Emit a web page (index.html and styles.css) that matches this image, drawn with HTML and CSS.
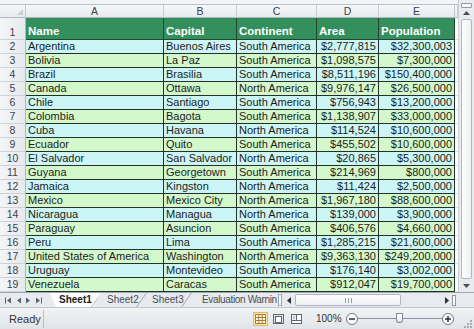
FILE: index.html
```html
<!DOCTYPE html>
<html lang="en">
  <head>
    <meta charset="UTF-8" />
    <title>Countries - Excel</title>
    <link rel="stylesheet" href="styles.css">
  </head>
  <body>
    <div class="app">
      <div class="main">
        <div class="work">
          <div class="edge"></div>

          <div class="row colhead">
            <div class="corner"><svg width="6" height="6"><polygon points="6,0 6,6 0,6" fill="#c9ced5"/></svg></div>
            <div>A</div><div>B</div><div>C</div><div>D</div><div>E</div><div></div>
          </div>

          <div class="row title">
            <div class="rh">1</div>
            <div class="cell">Name</div>
            <div class="cell">Capital</div>
            <div class="cell">Continent</div>
            <div class="cell">Area</div>
            <div class="cell">Population</div>
            <div class="gap"></div>
          </div>

          <div class="row cyan"><div class="rh">2</div><div class="cell">Argentina</div><div class="cell">Buenos Aires</div><div class="cell">South America</div><div class="cell num">$2,777,815</div><div class="cell num">$32,300,003</div><div class="gap"></div></div>
          <div class="row green"><div class="rh">3</div><div class="cell">Bolivia</div><div class="cell">La Paz</div><div class="cell">South America</div><div class="cell num">$1,098,575</div><div class="cell num">$7,300,000</div><div class="gap"></div></div>
          <div class="row cyan"><div class="rh">4</div><div class="cell">Brazil</div><div class="cell">Brasilia</div><div class="cell">South America</div><div class="cell num">$8,511,196</div><div class="cell num">$150,400,000</div><div class="gap"></div></div>
          <div class="row green"><div class="rh">5</div><div class="cell">Canada</div><div class="cell">Ottawa</div><div class="cell">North America</div><div class="cell num">$9,976,147</div><div class="cell num">$26,500,000</div><div class="gap"></div></div>
          <div class="row cyan"><div class="rh">6</div><div class="cell">Chile</div><div class="cell">Santiago</div><div class="cell">South America</div><div class="cell num">$756,943</div><div class="cell num">$13,200,000</div><div class="gap"></div></div>
          <div class="row green"><div class="rh">7</div><div class="cell">Colombia</div><div class="cell">Bagota</div><div class="cell">South America</div><div class="cell num">$1,138,907</div><div class="cell num">$33,000,000</div><div class="gap"></div></div>
          <div class="row cyan"><div class="rh">8</div><div class="cell">Cuba</div><div class="cell">Havana</div><div class="cell">North America</div><div class="cell num">$114,524</div><div class="cell num">$10,600,000</div><div class="gap"></div></div>
          <div class="row green"><div class="rh">9</div><div class="cell">Ecuador</div><div class="cell">Quito</div><div class="cell">South America</div><div class="cell num">$455,502</div><div class="cell num">$10,600,000</div><div class="gap"></div></div>
          <div class="row cyan"><div class="rh">10</div><div class="cell">El Salvador</div><div class="cell">San Salvador</div><div class="cell">North America</div><div class="cell num">$20,865</div><div class="cell num">$5,300,000</div><div class="gap"></div></div>
          <div class="row green"><div class="rh">11</div><div class="cell">Guyana</div><div class="cell">Georgetown</div><div class="cell">South America</div><div class="cell num">$214,969</div><div class="cell num">$800,000</div><div class="gap"></div></div>
          <div class="row cyan"><div class="rh">12</div><div class="cell">Jamaica</div><div class="cell">Kingston</div><div class="cell">North America</div><div class="cell num">$11,424</div><div class="cell num">$2,500,000</div><div class="gap"></div></div>
          <div class="row green"><div class="rh">13</div><div class="cell">Mexico</div><div class="cell">Mexico City</div><div class="cell">North America</div><div class="cell num">$1,967,180</div><div class="cell num">$88,600,000</div><div class="gap"></div></div>
          <div class="row cyan"><div class="rh">14</div><div class="cell">Nicaragua</div><div class="cell">Managua</div><div class="cell">North America</div><div class="cell num">$139,000</div><div class="cell num">$3,900,000</div><div class="gap"></div></div>
          <div class="row green"><div class="rh">15</div><div class="cell">Paraguay</div><div class="cell">Asuncion</div><div class="cell">South America</div><div class="cell num">$406,576</div><div class="cell num">$4,660,000</div><div class="gap"></div></div>
          <div class="row cyan"><div class="rh">16</div><div class="cell">Peru</div><div class="cell">Lima</div><div class="cell">South America</div><div class="cell num">$1,285,215</div><div class="cell num">$21,600,000</div><div class="gap"></div></div>
          <div class="row green"><div class="rh">17</div><div class="cell">United States of America</div><div class="cell">Washington</div><div class="cell">North America</div><div class="cell num">$9,363,130</div><div class="cell num">$249,200,000</div><div class="gap"></div></div>
          <div class="row cyan"><div class="rh">18</div><div class="cell">Uruguay</div><div class="cell">Montevideo</div><div class="cell">South America</div><div class="cell num">$176,140</div><div class="cell num">$3,002,000</div><div class="gap"></div></div>
          <div class="row green"><div class="rh">19</div><div class="cell">Venezuela</div><div class="cell">Caracas</div><div class="cell">South America</div><div class="cell num">$912,047</div><div class="cell num">$19,700,000</div><div class="gap"></div></div>
        </div>

        <!-- vertical scrollbar -->
        <div class="vscroll">
          <div class="splitbox"></div>
          <div class="vbtn"><svg width="7" height="4"><polygon points="0,4 3.5,0 7,4" fill="#4a505a"/></svg></div>
          <div class="vthumb"></div>
          <div class="vbtn"><svg width="7" height="4"><polygon points="0,0 7,0 3.5,4" fill="#4a505a"/></svg></div>
        </div>
      </div>

      <div class="tabbar">
        <div class="tabnav">
          <svg width="7" height="7"><rect x="0" y="0.5" width="1" height="6" fill="#5b6370"/><polygon points="6,0.5 2,3.5 6,6.5" fill="#5b6370"/></svg>
          <svg width="5" height="7"><polygon points="4,0.5 0,3.5 4,6.5" fill="#5b6370"/></svg>
          <svg width="5" height="7"><polygon points="0,0.5 4,3.5 0,6.5" fill="#5b6370"/></svg>
          <svg width="7" height="7"><polygon points="0,0.5 4,3.5 0,6.5" fill="#5b6370"/><rect x="5" y="0.5" width="1" height="6" fill="#5b6370"/></svg>
        </div>
        <div class="tab active">Sheet1</div>
        <div class="tab">Sheet2</div>
        <div class="tab">Sheet3</div>
        <div class="tab last">Evaluation Warnin</div>
        <div class="hsplit"></div>
        <div class="hscroll">
          <div class="hbtn"><svg width="4" height="7"><polygon points="4,0 0,3.5 4,7" fill="#2e3238"/></svg></div>
          <div class="htrack"><div class="hthumb"><span class="grip"></span></div></div>
          <div class="hbtn"><svg width="4" height="7"><polygon points="0,0 4,3.5 0,7" fill="#2e3238"/></svg></div>
          <div class="hbox"></div>
        </div>
        <div class="corner-fill"></div>
      </div>

      <div class="status">
        <div class="ready">Ready</div>
        <div class="views">
          <div class="view on">
            <svg width="11" height="10"><rect x="0.5" y="0.5" width="10" height="9" fill="#fff" stroke="#b07a2a"/><path d="M0.5 3.5h10M0.5 6.5h10M3.8 0.5v9M7.2 0.5v9" stroke="#b07a2a" fill="none"/></svg>
          </div>
          <div class="view">
            <svg width="11" height="10"><rect x="0.5" y="0.5" width="10" height="9" fill="#dfe4ea" stroke="#5e6772"/><rect x="2.5" y="2.5" width="6" height="6" fill="#fff" stroke="#5e6772"/></svg>
          </div>
          <div class="view">
            <svg width="11" height="10"><rect x="0.5" y="0.5" width="10" height="9" fill="#fff" stroke="#5e6772"/><path d="M0.5 6.5h10M5.5 0.5v6" stroke="#5e6772" fill="none"/><rect x="1.5" y="1.5" width="3" height="4" fill="#c8d0da"/></svg>
          </div>
        </div>
        <div class="zoom">100%</div>
        <div class="zbtn"><svg width="12" height="12"><circle cx="6" cy="6" r="5.5" fill="#fff" stroke="#6f7884"/><path d="M3 6h6" stroke="#2e3238" stroke-width="1.5"/></svg></div>
        <div class="slider"><span class="knob"></span></div>
        <div class="zbtn"><svg width="12" height="12"><circle cx="6" cy="6" r="5.5" fill="#fff" stroke="#6f7884"/><path d="M3 6h6M6 3v6" stroke="#2e3238" stroke-width="1.5"/></svg></div>
        <div class="grip-corner">
          <svg width="8" height="8"><g fill="#a6adb6"><rect x="6" y="0" width="2" height="2"/><rect x="3" y="3" width="2" height="2"/><rect x="6" y="3" width="2" height="2"/><rect x="0" y="6" width="2" height="2"/><rect x="3" y="6" width="2" height="2"/><rect x="6" y="6" width="2" height="2"/></g></svg>
        </div>
      </div>
    </div>
  </body>
</html>
```

FILE: styles.css
```css
*{margin:0;padding:0;box-sizing:border-box;}
body{font-family:"Liberation Sans",Arial,sans-serif;font-size:11px;color:#1c1c1c;background:#fff;}
.app{width:474px;height:329px;display:flex;flex-direction:column;overflow:hidden;}

/* sheet */
.main{display:flex;height:292px;}
.work{width:458px;display:flex;flex-direction:column;}
.edge{height:5px;background:#f3f4f6;border-bottom:1px solid #b9c0c9;}
.row{display:grid;grid-template-columns:26px 138px 73px 80px 62px 76px 3px;height:14px;}
.colhead{height:13px;}
.colhead div{background:linear-gradient(#f7f8fa,#e7eaee);border-right:1px solid #c6ccd4;border-bottom:1px solid #aeb6c0;text-align:center;line-height:12px;color:#3d4148;font-size:10.5px;}
.colhead .corner{display:flex;align-items:flex-end;justify-content:flex-end;padding:0 2px 2px 0;}
.rh{background:linear-gradient(90deg,#f4f5f7,#e6e9ed);border-right:1px solid #aeb6c0;border-bottom:1px solid #cdd2d8;text-align:center;line-height:13px;color:#3d4148;font-size:10.5px;}
.cell{border-right:1px solid #26302b;border-bottom:1px solid #26302b;padding:0 2px;line-height:13px;white-space:nowrap;overflow:hidden;}
.num{text-align:right;}
.gap{background:#fff;border-bottom:1px solid #dde0e4;}
.title{height:22px;}
.title .cell{background:#33905c;color:#fff;font-weight:bold;font-size:11.5px;padding-top:7px;border-color:#24442f;}
.title .rh{padding-top:8px;}
.cyan .cell{background:#ccf6f6;}
.green .cell{background:#d3f8cc;}

/* vertical scrollbar */
.vscroll{width:16px;background:#e8ebef;border-left:1px solid #c9ced5;display:flex;flex-direction:column;align-items:center;padding:3px 0 2px;}
.splitbox{width:11px;height:5px;border:1px solid #8f97a2;background:#fbfbfc;border-radius:1px;}
.vbtn{height:9px;display:flex;align-items:center;justify-content:center;}
.vthumb{flex:1;width:11px;margin:2px 0;border:1px solid #b0b8c2;border-radius:2px;background:linear-gradient(90deg,#fefefe,#eef1f4);}

/* sheet tabs */
.tabbar{height:15px;display:flex;align-items:stretch;background:#e7eaee;border-top:1px solid #9fa7b1;font-size:10px;color:#4a4f57;}
.tabnav{width:50px;display:flex;align-items:center;justify-content:space-between;padding:0 7px 0 5px;}
.tab{position:relative;width:45px;padding-left:7px;line-height:13px;white-space:nowrap;}
.tab::after{content:"";position:absolute;right:3px;top:0;bottom:0;border-right:1px solid #a3abb5;transform:skewX(-35deg);}
.tab.active{width:50px;padding-left:9px;background:#fff;font-weight:bold;color:#1c1c1c;clip-path:polygon(0 0,100% 0,calc(100% - 6px) 100%,6px 100%);}
.tab.last{width:88px;padding-left:12px;letter-spacing:-0.35px;}
.tab.last::after{display:none;}
.hsplit{width:4px;margin:1px 0;border:1px solid #9da5af;background:#f6f7f9;}
.hscroll{flex:1;display:flex;align-items:center;padding-left:2px;}
.hbtn{width:9px;display:flex;justify-content:center;}
.htrack{flex:1;height:100%;padding:1px 41px 1px 2px;}
.hthumb{height:100%;border:1px solid #b0b8c2;border-radius:2px;background:linear-gradient(#fefefe,#eceff3);display:flex;align-items:center;justify-content:center;}
.grip{width:7px;height:5px;border-left:1px solid #9aa2ac;border-right:1px solid #9aa2ac;position:relative;}
.grip::after{content:"";position:absolute;left:2px;top:0;bottom:0;border-left:1px solid #9aa2ac;}
.hbox{width:4px;height:11px;margin:0 2px 0 1px;border:1px solid #8f97a2;background:#fbfbfc;}
.corner-fill{width:16px;background:#e8ebef;}

/* status bar */
.status{height:22px;display:flex;align-items:center;background:linear-gradient(#f1f3f5,#e0e4e9);border-top:1px solid #c3c8cf;color:#333;}
.ready{width:44px;height:18px;line-height:18px;padding-left:9px;border-right:1px solid #b7bec7;}
.views{margin-left:auto;display:flex;gap:3px;}
.view{width:15px;height:14px;display:flex;align-items:center;justify-content:center;}
.view.on{background:#fde9a4;border:1px solid #e2bd56;}
.zoom{margin-left:12px;width:30px;font-size:10px;}
.zbtn{display:flex;}
.slider{width:84px;height:1px;background:#8b94a0;position:relative;}
.knob{position:absolute;left:38px;top:-5px;width:7px;height:10px;background:linear-gradient(#fff,#e3e7ec);border:1px solid #7d8691;border-radius:1px 1px 4px 4px;}
.grip-corner{margin-left:10px;margin-right:2px;display:flex;align-items:flex-end;height:18px;}
```
